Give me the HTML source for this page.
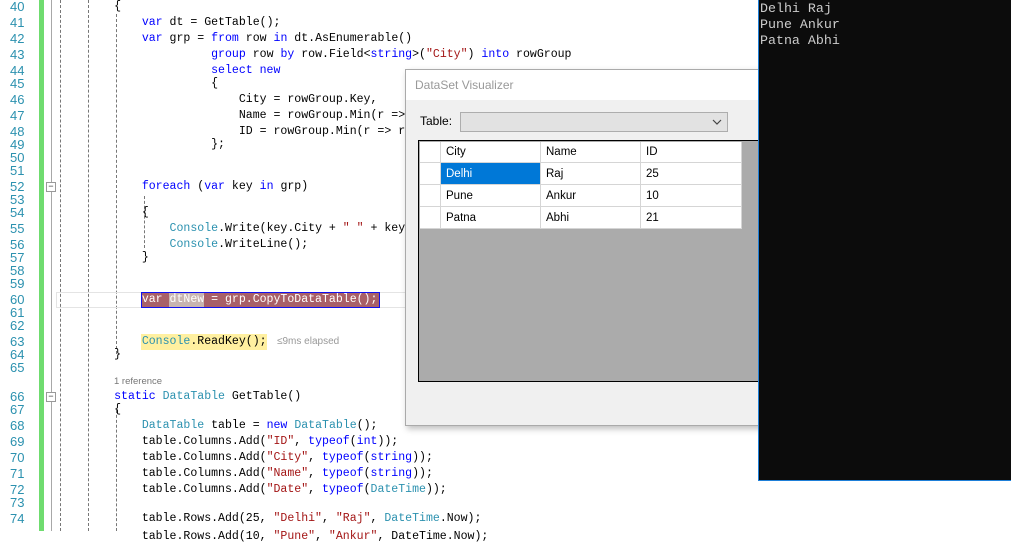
<!DOCTYPE html>
<html><head><meta charset="utf-8"><style>
body{margin:0;width:1011px;height:531px;overflow:hidden;background:#fff;position:relative;font-family:"Liberation Mono",monospace}
.ln{position:absolute;left:10px;width:28px;font-size:13px;color:#2b91af;font-family:"Liberation Sans",sans-serif;line-height:14px}
.c{position:absolute;left:86.4px;font-size:11.55px;line-height:14px;white-space:pre;color:#000}
.k{color:#0000ff}.t{color:#2b91af}.s{color:#a31515}
.dash{position:absolute;top:0;height:531px;border-left:1px dashed #777}
.sans{font-family:"Liberation Sans",sans-serif}
.cell{position:absolute;height:21px;line-height:21px;font-size:11.5px;font-family:"Liberation Sans",sans-serif;background:#fff;border-right:1px solid #d5d5d5;border-bottom:1px solid #d5d5d5;box-sizing:border-box;padding-left:5px}
</style></head><body>
<div style="position:absolute;left:39px;top:0;width:5px;height:531px;background:#6fdc6f"></div>
<div style="position:absolute;left:51px;top:0;height:531px;border-left:1px solid #a8a8a8"></div>
<div class="dash" style="left:60px"></div>
<div class="dash" style="left:88px"></div>
<div class="dash" style="left:116px;top:14px;height:340px"></div>
<div class="dash" style="left:116px;top:410px;height:121px"></div>
<div class="dash" style="left:144px;top:196px;height:52px"></div>
<div style="position:absolute;left:46px;top:182px;width:8px;height:8px;border:1px solid #999;background:#fff;font-size:9px;line-height:8px;text-align:center;color:#333">−</div>
<div style="position:absolute;left:46px;top:392px;width:8px;height:8px;border:1px solid #999;background:#fff;font-size:9px;line-height:8px;text-align:center;color:#333">−</div>
<div style="position:absolute;left:56px;top:292px;width:350px;height:16px;border:1px solid #e4e4e4;box-sizing:border-box"></div>

<div class="ln" style="top:0">40</div><div class="c" style="top:0">    {</div>
<div class="ln" style="top:16px">41</div><div class="c" style="top:16px">        <span class="k">var</span> dt = GetTable();</div>
<div class="ln" style="top:32px">42</div><div class="c" style="top:32px">        <span class="k">var</span> grp = <span class="k">from</span> row <span class="k">in</span> dt.AsEnumerable()</div>
<div class="ln" style="top:48px">43</div><div class="c" style="top:48px">                  <span class="k">group</span> row <span class="k">by</span> row.Field&lt;<span class="k">string</span>&gt;(<span class="s">"City"</span>) <span class="k">into</span> rowGroup</div>
<div class="ln" style="top:64px">44</div><div class="c" style="top:64px">                  <span class="k">select new</span></div>
<div class="ln" style="top:77px">45</div><div class="c" style="top:77px">                  {</div>
<div class="ln" style="top:93px">46</div><div class="c" style="top:93px">                      City = rowGroup.Key,</div>
<div class="ln" style="top:109px">47</div><div class="c" style="top:109px">                      Name = rowGroup.Min(r =&gt; r.Field&lt;string&gt;("Name")),</div>
<div class="ln" style="top:125px">48</div><div class="c" style="top:125px">                      ID = rowGroup.Min(r =&gt; r.Field&lt;int&gt;("ID"))</div>
<div class="ln" style="top:138px">49</div><div class="c" style="top:138px">                  };</div>
<div class="ln" style="top:151px">50</div>
<div class="ln" style="top:164px">51</div>
<div class="ln" style="top:180px">52</div><div class="c" style="top:180px">        <span class="k">foreach</span> (<span class="k">var</span> key <span class="k">in</span> grp)</div>
<div class="ln" style="top:193px">53</div>
<div class="ln" style="top:206px">54</div><div class="c" style="top:206px">        {</div>
<div class="ln" style="top:222px">55</div><div class="c" style="top:222px">            <span class="t">Console</span>.Write(key.City + <span class="s">" "</span> + key.Name);</div>
<div class="ln" style="top:238px">56</div><div class="c" style="top:238px">            <span class="t">Console</span>.WriteLine();</div>
<div class="ln" style="top:251px">57</div><div class="c" style="top:251px">        }</div>
<div class="ln" style="top:264px">58</div>
<div class="ln" style="top:277px">59</div>
<div class="ln" style="top:293px">60</div>
<div style="position:absolute;left:141px;top:292px;width:239px;height:16px;background:#a86068;border:1px solid #1010f0;box-sizing:border-box"></div>
<div style="position:absolute;left:169px;top:293px;width:35px;height:14px;background:#c8b4b0"></div>
<div class="c" style="top:293px;color:#fff">        var dtNew = grp.CopyToDataTable();</div>
<div class="ln" style="top:306px">61</div>
<div class="ln" style="top:319px">62</div>
<div class="ln" style="top:335px">63</div>
<div style="position:absolute;left:141px;top:334px;width:126px;height:16px;background:#fff0a0"></div>
<div class="c" style="top:335px">        <span class="t">Console</span>.ReadKey();</div>
<div class="sans" style="position:absolute;left:277px;top:335px;font-size:10px;color:#999;line-height:14px">≤9ms elapsed</div>
<div class="ln" style="top:348px">64</div><div class="c" style="top:348px">    }</div>
<div class="ln" style="top:361px">65</div>
<div class="sans" style="position:absolute;left:114px;top:376px;font-size:9.5px;color:#777;line-height:12px">1 reference</div>
<div class="ln" style="top:390px">66</div><div class="c" style="top:390px">    <span class="k">static</span> <span class="t">DataTable</span> GetTable()</div>
<div class="ln" style="top:403px">67</div><div class="c" style="top:403px">    {</div>
<div class="ln" style="top:419px">68</div><div class="c" style="top:419px">        <span class="t">DataTable</span> table = <span class="k">new</span> <span class="t">DataTable</span>();</div>
<div class="ln" style="top:435px">69</div><div class="c" style="top:435px">        table.Columns.Add(<span class="s">"ID"</span>, <span class="k">typeof</span>(<span class="k">int</span>));</div>
<div class="ln" style="top:451px">70</div><div class="c" style="top:451px">        table.Columns.Add(<span class="s">"City"</span>, <span class="k">typeof</span>(<span class="k">string</span>));</div>
<div class="ln" style="top:467px">71</div><div class="c" style="top:467px">        table.Columns.Add(<span class="s">"Name"</span>, <span class="k">typeof</span>(<span class="k">string</span>));</div>
<div class="ln" style="top:483px">72</div><div class="c" style="top:483px">        table.Columns.Add(<span class="s">"Date"</span>, <span class="k">typeof</span>(<span class="t">DateTime</span>));</div>
<div class="ln" style="top:496px">73</div>
<div class="ln" style="top:512px">74</div><div class="c" style="top:512px">        table.Rows.Add(25, <span class="s">"Delhi"</span>, <span class="s">"Raj"</span>, <span class="t">DateTime</span>.Now);</div>
<div class="c" style="top:530px">        table.Rows.Add(10, <span class="s">"Pune"</span>, <span class="s">"Ankur"</span>, DateTime.Now);</div>

<div style="position:absolute;left:405px;top:69px;width:360px;height:357px;background:#f0f0f0;border:1px solid #aaa;box-sizing:border-box;box-shadow:2px 3px 6px rgba(0,0,0,.25)">
  <div class="sans" style="height:30px;background:#fff;color:#999;font-size:12px;line-height:30px;padding-left:9px">DataSet Visualizer</div>
  <div class="sans" style="position:absolute;left:14px;top:44px;font-size:12px;color:#000">Table:</div>
  <div style="position:absolute;left:54px;top:42px;width:268px;height:20px;background:#e2e2e2;border:1px solid #adadad;box-sizing:border-box"><svg style="position:absolute;right:5px;top:6px" width="10" height="6"><path d="M1 1 L5 5 L9 1" fill="none" stroke="#444" stroke-width="1.2"/></svg></div>
  <div style="position:absolute;left:12px;top:70px;width:348px;height:242px;background:#ababab;border:1px solid #000;box-sizing:border-box;border-right:none"></div>
</div>
<div class="cell" style="left:420px;top:142px;width:21px;height:21px"></div>
<div class="cell" style="left:441px;top:142px;width:100px">City</div>
<div class="cell" style="left:541px;top:142px;width:100px">Name</div>
<div class="cell" style="left:641px;top:142px;width:101px">ID</div>
<div class="cell" style="left:420px;top:163px;width:21px;height:22px"></div>
<div class="cell" style="left:441px;top:163px;width:100px;height:22px;line-height:22px;background:#0078d7;color:#fff">Delhi</div>
<div class="cell" style="left:541px;top:163px;width:100px;height:22px;line-height:22px">Raj</div>
<div class="cell" style="left:641px;top:163px;width:101px;height:22px;line-height:22px">25</div>
<div class="cell" style="left:420px;top:185px;width:21px;height:22px"></div>
<div class="cell" style="left:441px;top:185px;width:100px;height:22px;line-height:22px">Pune</div>
<div class="cell" style="left:541px;top:185px;width:100px;height:22px;line-height:22px">Ankur</div>
<div class="cell" style="left:641px;top:185px;width:101px;height:22px;line-height:22px">10</div>
<div class="cell" style="left:420px;top:207px;width:21px;height:22px"></div>
<div class="cell" style="left:441px;top:207px;width:100px;height:22px;line-height:22px">Patna</div>
<div class="cell" style="left:541px;top:207px;width:100px;height:22px;line-height:22px">Abhi</div>
<div class="cell" style="left:641px;top:207px;width:101px;height:22px;line-height:22px">21</div>

<div style="position:absolute;left:758px;top:0;width:253px;height:481px;background:#0c0c0c;border-left:1px solid #1e7fd8;border-bottom:1px solid #1e7fd8;box-sizing:border-box;color:#ccc;font-size:13.3px;line-height:16px;padding:1px 0 0 1px;white-space:pre">Delhi Raj
Pune Ankur
Patna Abhi</div>
</body></html>
